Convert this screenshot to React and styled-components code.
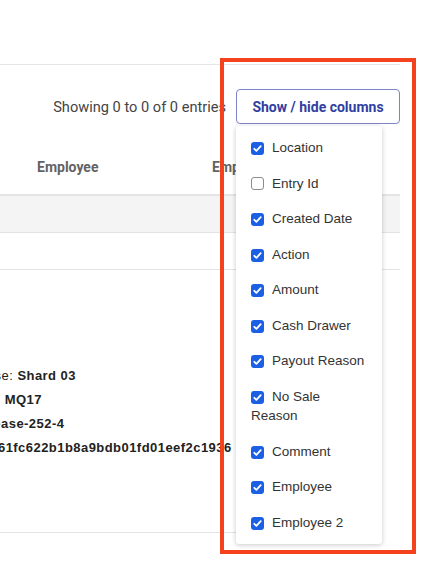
import React from "react";
import styled, { createGlobalStyle } from "styled-components";

const GlobalStyle = createGlobalStyle`
  html, body { margin: 0; padding: 0; background: #ffffff; }
  body { font-family: "Liberation Sans", Arial, sans-serif; }
  * { box-sizing: border-box; }
`;

const Page = styled.div`
  position: relative;
  width: 432px;
  height: 571px;
  overflow: hidden;
  background: #fff;
`;

const TopBar = styled.div`
  width: 400px;
  height: 65px;
  border-bottom: 1px solid #e6e6e6;
`;

const Toolbar = styled.div`
  width: 400px;
  display: flex;
  justify-content: flex-end;
  align-items: center;
  gap: 10px;
  padding-top: 24px;
`;

const Summary = styled.span`
  font-family: Roboto, "Liberation Sans", sans-serif;
  font-size: 14.6px;
  color: #444;
  white-space: nowrap;
`;

const ButtonWrap = styled.div`
  position: relative;
`;

const ToggleButton = styled.button`
  height: 35px;
  width: 164px;
  padding: 0;
  border: 1px solid #7d84c4;
  border-radius: 4px;
  background: #fff;
  color: #3140a0;
  font-family: Roboto, "Liberation Sans", sans-serif;
  font-weight: 700;
  font-size: 14px;
  cursor: pointer;
`;

const Dropdown = styled.div`
  position: absolute;
  top: calc(100% + 2px);
  left: 0;
  width: 146px;
  padding: 4px 0;
  background: #fff;
  border-radius: 3px;
  box-shadow: 0 1px 5px rgba(0, 0, 0, 0.22);
  z-index: 2;
`;

const Item = styled.label`
  display: block;
  padding: 8px 15px;
  font-size: 13.5px;
  line-height: 19.5px;
  color: #333;
  cursor: pointer;
`;

const Box = styled.span`
  display: inline-flex;
  align-items: center;
  justify-content: center;
  width: 13px;
  height: 13px;
  margin-right: 8px;
  vertical-align: -2px;
  border-radius: 3px;
  background: ${(p) => (p.$checked ? "#1b5fe4" : "#fff")};
  border: ${(p) => (p.$checked ? "none" : "1px solid #8c8c8c")};
`;

const Table = styled.div`
  width: 400px;
  overflow: hidden;
`;

const HeaderRow = styled.div`
  display: flex;
  height: 72px;
  padding: 16px 0 0 37px;
  align-items: center;
  border-bottom: 2px solid #e4e4e4;
`;

const HeaderCell = styled.div`
  flex: 0 0 175px;
  font-family: Roboto, "Liberation Sans", sans-serif;
  font-weight: 700;
  font-size: 14px;
  color: #636363;
  white-space: nowrap;
`;

const BodyRow = styled.div`
  height: 37px;
  background: ${(p) => (p.$shade ? "#f4f4f4" : "#fff")};
  border-bottom: 1px solid #e3e3e3;
`;

const DetailRow = styled.div`
  width: 300px;
  height: 263px;
  padding-top: 94px;
  border-bottom: 1px solid #e3e3e3;
  overflow: hidden;
`;

const Details = styled.div`
  margin-left: -50px;
  font-size: 13px;
  letter-spacing: 0.45px;
  line-height: 24px;
  color: #222;
  white-space: nowrap;
`;

const Line = styled.div``;

const Label = styled.span`
  font-weight: 400;
`;

const Value = styled.span`
  font-weight: 700;
`;

const Annotation = styled.div`
  position: absolute;
  left: 220px;
  top: 58px;
  width: 196px;
  height: 496px;
  border: 4px solid #f4411e;
  pointer-events: none;
  z-index: 3;
`;

const Check = ({ checked }) => (
  <Box $checked={checked}>
    {checked && (
      <svg width="11" height="11" viewBox="0 0 11 11">
        <path
          d="M2.3 5.8 L4.4 7.9 L8.7 3.2"
          fill="none"
          stroke="#fff"
          strokeWidth="1.8"
          strokeLinecap="round"
          strokeLinejoin="round"
        />
      </svg>
    )}
  </Box>
);

const columns = [
  ["Location", true],
  ["Entry Id", false],
  ["Created Date", true],
  ["Action", true],
  ["Amount", true],
  ["Cash Drawer", true],
  ["Payout Reason", true],
  ["No Sale Reason", true],
  ["Comment", true],
  ["Employee", true],
  ["Employee 2", true],
];

const details = [
  ["Database:", "Shard 03"],
  ["Replica:", "MQ17"],
  ["Git:", "release-252-4"],
  ["Hash:", "561fc622b1b8a9bdb01fd01eef2c1936"],
];

export default function App() {
  return (
    <>
      <GlobalStyle />
      <Page>
        <TopBar />
        <Toolbar>
          <Summary>Showing 0 to 0 of 0 entries</Summary>
          <ButtonWrap>
            <ToggleButton>Show / hide columns</ToggleButton>
            <Dropdown>
              {columns.map(([name, checked]) => (
                <Item key={name}>
                  <Check checked={checked} />
                  {name}
                </Item>
              ))}
            </Dropdown>
          </ButtonWrap>
        </Toolbar>
        <Table>
          <HeaderRow>
            <HeaderCell>Employee</HeaderCell>
            <HeaderCell>Employee 2</HeaderCell>
          </HeaderRow>
          <BodyRow $shade />
          <BodyRow />
        </Table>
        <DetailRow>
          <Details>
            {details.map(([l, v]) => (
              <Line key={l}>
                <Label>{l}</Label> <Value>{v}</Value>
              </Line>
            ))}
          </Details>
        </DetailRow>
        <Annotation />
      </Page>
    </>
  );
}
